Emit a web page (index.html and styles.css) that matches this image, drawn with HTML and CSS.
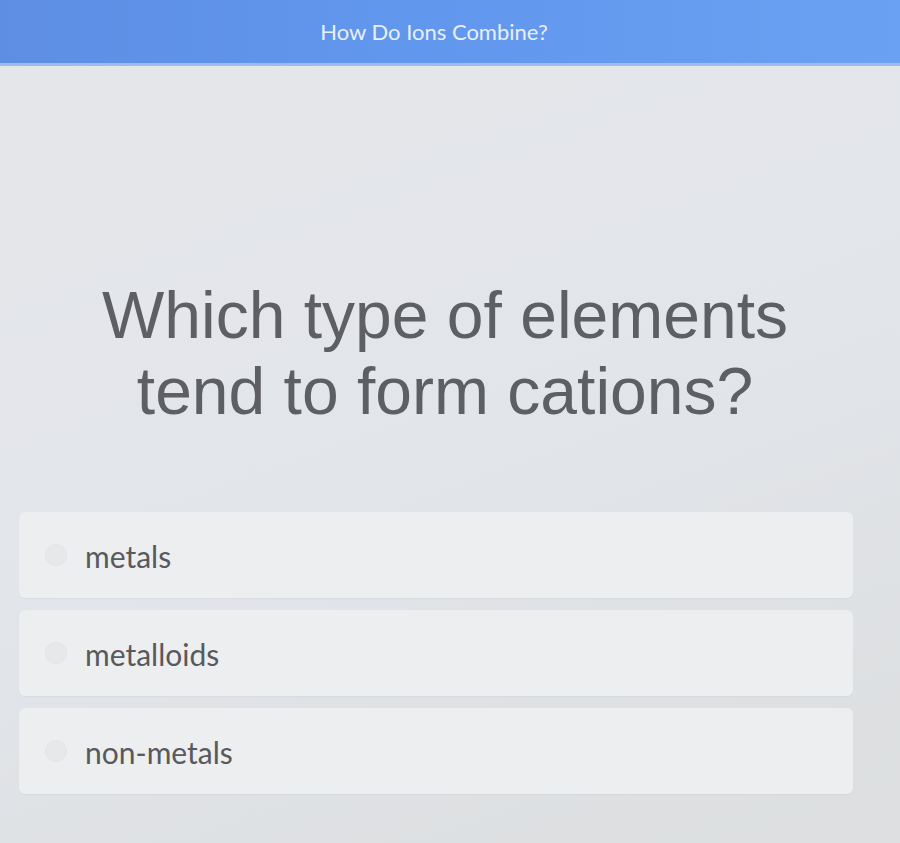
FILE: index.html
```html
<!DOCTYPE html>
<html>
<head>
<meta charset="utf-8">
<link rel="stylesheet" href="styles.css">
</head>
<body>
<div class="page">
  <header class="topbar">How Do Ions Combine?</header>
  <main class="content">
    <h1 class="question">Which type of elements<br>tend to form cations?</h1>
    <ul class="options">
      <li class="option"><span class="radio"></span><span class="label">metals</span></li>
      <li class="option"><span class="radio"></span><span class="label">metalloids</span></li>
      <li class="option"><span class="radio"></span><span class="label">non-metals</span></li>
    </ul>
  </main>
</div>
</body>
</html>
```
FILE: styles.css
```css
* { box-sizing: border-box; }
html, body { margin: 0; padding: 0; }
body {
  width: 900px;
  height: 843px;
  overflow: hidden;
  background: linear-gradient(160deg, #e6e7ea 0%, #e2e5ea 50%, #dcdedf 100%);
  font-family: Lato, "Liberation Sans", sans-serif;
}
.page { display: flex; flex-direction: column; height: 843px; }
.topbar {
  height: 66px;
  display: flex;
  align-items: center;
  justify-content: center;
  padding-right: 32px;
  background: linear-gradient(90deg, #5d8ee4 0%, #6198ee 50%, #6aa1f2 100%);
  color: #e9effa;
  font-size: 22px;
  border-bottom: 3px solid #9dbcf0;
}
.content {
  flex: 1;
  display: flex;
  flex-direction: column;
  padding: 0 47px 0 19px;
}
.question {
  margin: 211px 0 0;
  font-family: "Liberation Sans", Arial, sans-serif;
  font-weight: normal;
  font-size: 66px;
  line-height: 76px;
  color: #5e5f64;
  text-align: center;
  padding-left: 18px;
}
.options {
  list-style: none;
  margin: 83px 0 0;
  padding: 0;
  display: flex;
  flex-direction: column;
  gap: 12px;
}
.option {
  height: 86px;
  display: flex;
  align-items: center;
  background: #eceef0;
  border-radius: 6px;
  padding-left: 26px;
  box-shadow: 0 1px 2px rgba(0,0,0,0.04);
}
.radio {
  width: 22px;
  height: 22px;
  border-radius: 50%;
  background: #e6e8ea;
  border: 1px solid #e2e4e6;
}
.label {
  margin-left: 18px;
  font-size: 30px;
  color: #58595c;
  margin-top: 2px;
}
```
